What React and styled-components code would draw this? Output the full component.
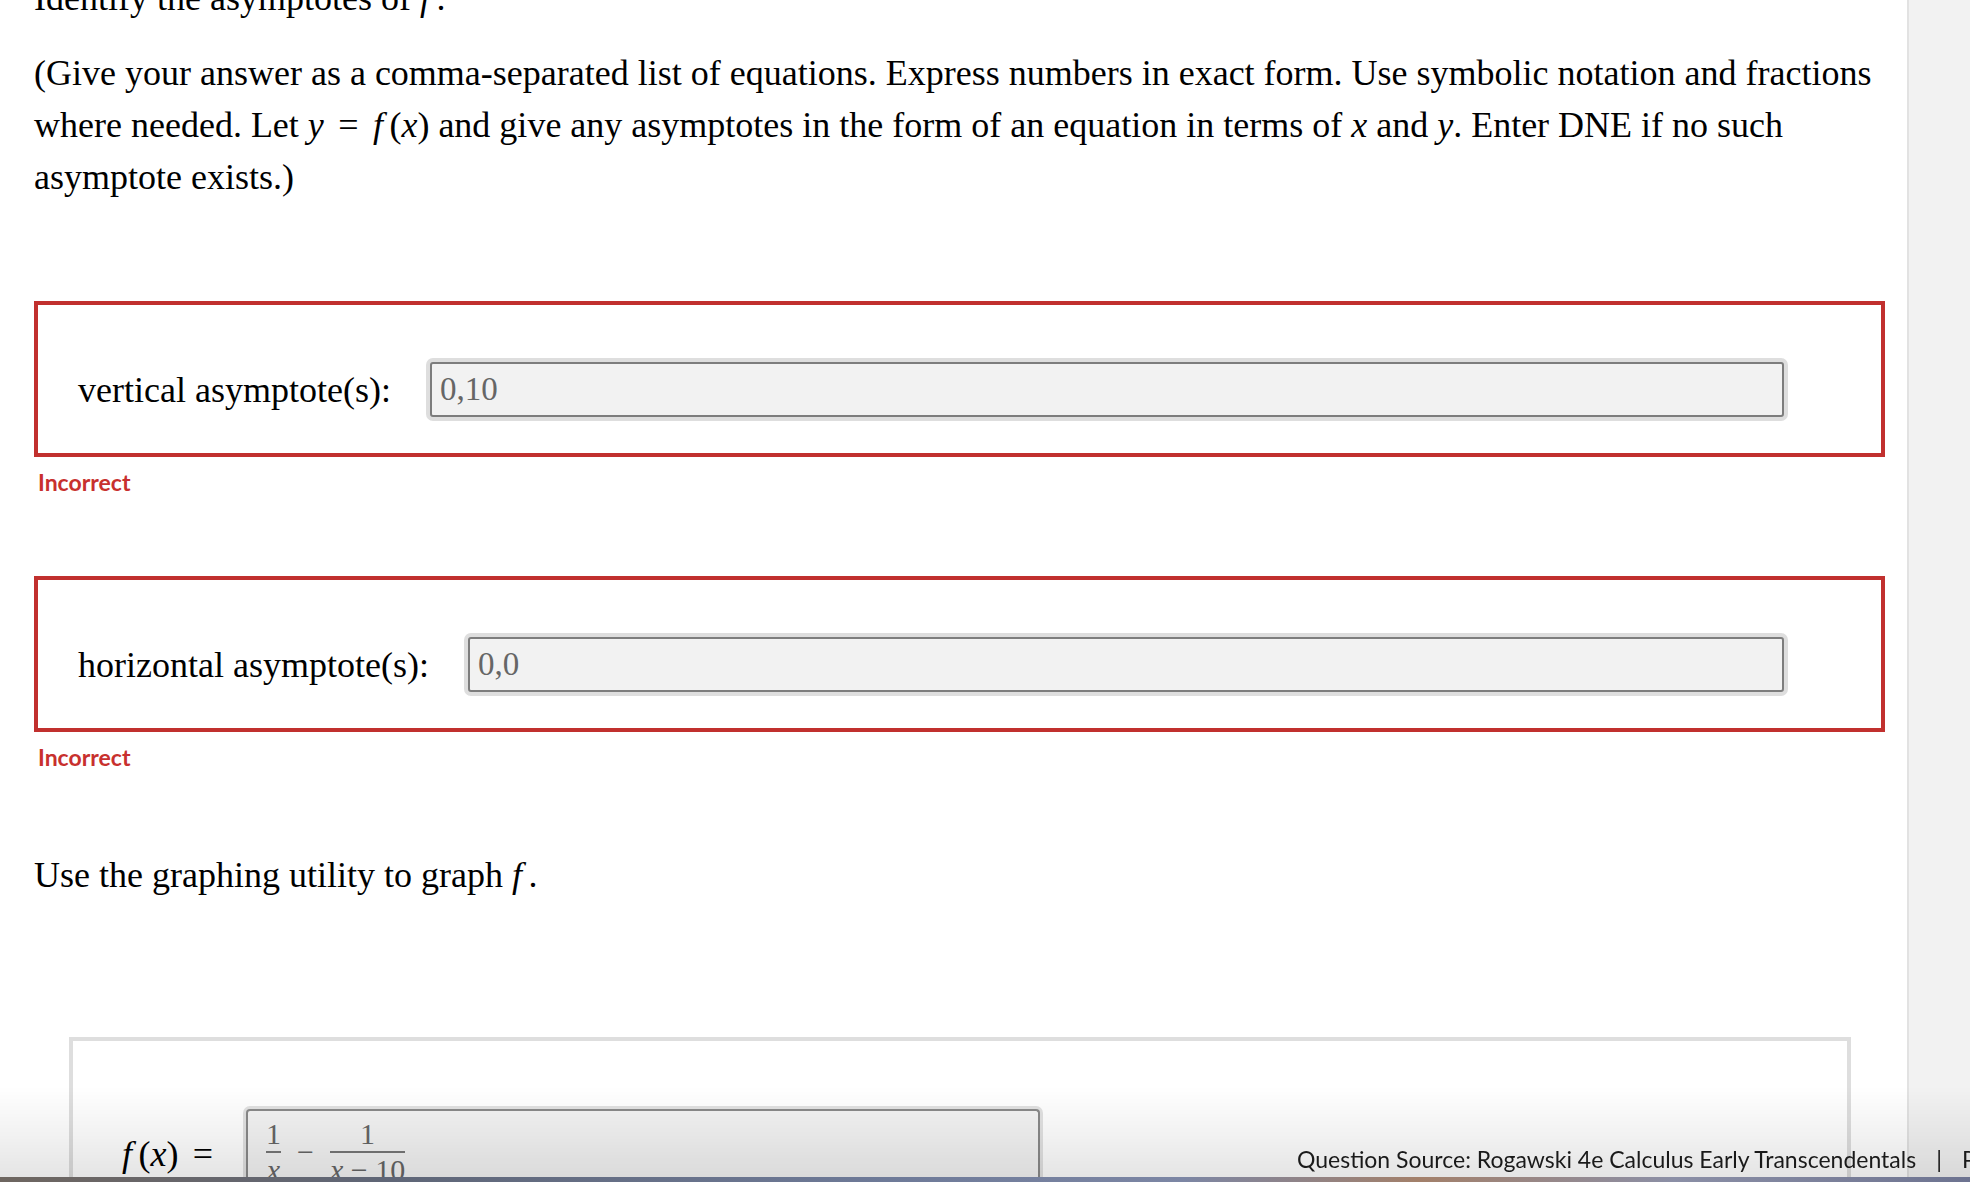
import React from 'react';
import styled, { createGlobalStyle } from 'styled-components';

const GlobalStyle = createGlobalStyle`
    html, body {
        margin: 0;
        padding: 0;
        background: #ffffff;
        overflow: hidden;
    }
    body {
        font-family: "Liberation Serif", "Times New Roman", serif;
        color: #000;
    }
`;

const Screen = styled.div`
    display: flex;
    width: 1970px;
    height: 1182px;
    overflow: hidden;
`;

const Main = styled.div`
    width: 1907px;
    padding: 0 22px 0 34px;
    box-sizing: border-box;
`;

const Sidebar = styled.div`
    flex: 1;
    background: #f2f2f2;
    border-left: 2px solid #e2e2e2;
`;

const Content = styled.div`
    margin-top: -28px;
`;

const Para = styled.p`
    font-size: 36px;
    line-height: 52px;
    margin: ${p => p.$top || 0}px 0 ${p => p.$gap || 0}px;
`;

const Var = styled.i`
    font-style: italic;
    padding-right: ${p => (p.$f ? '0.18em' : '0')};
`;

const Eq = styled.span`
    margin: 0 0.4em;
`;

const AnswerBox = styled.div`
    display: flex;
    align-items: center;
    border: 4px solid #c1302e;
    padding: 57px 97px 36px 40px;
    margin-top: ${p => p.$top}px;
`;

const Label = styled.span`
    font-size: 36px;
    white-space: nowrap;
    margin-right: 39px;
`;

const Field = styled.div`
    flex: 1;
    height: 51px;
    display: flex;
    align-items: center;
    padding-left: 8px;
    background: #f2f2f2;
    border: 2px solid #7d7d7d;
    border-radius: 3px;
    box-shadow: 0 0 0 4px #dedede;
    font-size: 33px;
    color: #666;
`;

const Feedback = styled.div`
    font-family: Lato, "Open Sans", sans-serif;
    font-weight: 700;
    font-size: 23px;
    color: #c8302e;
    margin: 11px 0 0 4px;
    line-height: 28px;
`;

const GraphPanel = styled.div`
    margin: 136px 34px 0 35px;
    border: 4px solid #dedede;
    height: 260px;
    padding: 68px 0 0 49px;
    box-sizing: border-box;
`;

const FormulaRow = styled.div`
    display: flex;
    align-items: flex-start;
`;

const FormulaLabel = styled.span`
    width: 102px;
    font-size: 36px;
    margin-top: 24px;
    margin-right: 22px;
    white-space: nowrap;
`;

const FormulaField = styled.div`
    width: 794px;
    height: 140px;
    background: #f4f4f4;
    border: 2px solid #8a8a8a;
    border-bottom: none;
    border-radius: 4px 4px 0 0;
    box-shadow: 0 0 0 3px #e2e2e2;
    display: flex;
    align-items: flex-start;
    padding: 8px 0 0 18px;
    box-sizing: border-box;
    color: #666;
    font-size: 30px;
`;

const Frac = styled.span`
    display: inline-flex;
    flex-direction: column;
    align-items: center;
    line-height: 30px;
`;

const Bar = styled.span`
    align-self: stretch;
    height: 2px;
    background: #777;
    margin: 2px 0;
`;

const Minus = styled.span`
    margin: 16px 16px 0;
`;

const Footer = styled.div`
    position: fixed;
    left: 0;
    right: 0;
    bottom: 0;
    height: 96px;
    display: flex;
    flex-direction: column;
    justify-content: flex-end;
    background: linear-gradient(to bottom, rgba(0,0,0,0) 0%, rgba(0,0,0,0.05) 50%, rgba(0,0,0,0.11) 100%);
    pointer-events: none;
`;

const SourceLine = styled.div`
    padding-left: 1297px;
    white-space: nowrap;
    overflow: hidden;
    font-family: Lato, "Open Sans", sans-serif;
    font-size: 23px;
    color: #1a1a1a;
    line-height: 28px;
    margin-bottom: 4px;
`;

const Sep = styled.span`
    margin: 0 20px;
`;

const Strip = styled.div`
    height: 5px;
    background: linear-gradient(to right, #6e6660 0%, #5f6677 20%, #6e7a98 45%, #7c86a4 60%, #a3806a 72%, #8b8fa6 85%, #6d7390 100%);
`;

const Fraction = ({ top, bottom }) => (
    <Frac>
        <span>{top}</span>
        <Bar />
        <span>{bottom}</span>
    </Frac>
);

const App = () => {
    return (
        <>
            <GlobalStyle />
            <Screen>
                <Main>
                    <Content>
                        <Para $gap={23}>Identify the asymptotes of <Var $f>f</Var>.</Para>
                        <Para>
                            (Give your answer as a comma-separated list of equations. Express numbers in exact form. Use symbolic notation and fractions
                            where needed. Let <Var>y</Var><Eq>=</Eq><Var $f>f</Var>(<Var>x</Var>) and give any asymptotes in the form of an equation in terms of <Var>x</Var> and <Var>y</Var>. Enter DNE if no such
                            asymptote exists.)
                        </Para>

                        <AnswerBox $top={98}>
                            <Label>vertical asymptote(s):</Label>
                            <Field>0,10</Field>
                        </AnswerBox>
                        <Feedback>Incorrect</Feedback>

                        <AnswerBox $top={80}>
                            <Label>horizontal asymptote(s):</Label>
                            <Field>0,0</Field>
                        </AnswerBox>
                        <Feedback>Incorrect</Feedback>

                        <Para $top={78}>Use the graphing utility to graph <Var $f>f</Var>.</Para>

                        <GraphPanel>
                            <FormulaRow>
                                <FormulaLabel><Var $f>f</Var>(<Var>x</Var>)<Eq>=</Eq></FormulaLabel>
                                <FormulaField>
                                    <Fraction top="1" bottom={<Var>x</Var>} />
                                    <Minus>−</Minus>
                                    <Fraction top="1" bottom={<><Var>x</Var> − 10</>} />
                                </FormulaField>
                            </FormulaRow>
                        </GraphPanel>
                    </Content>
                </Main>
                <Sidebar />
            </Screen>
            <Footer>
                <SourceLine>
                    Question Source: Rogawski 4e Calculus Early Transcendentals<Sep>|</Sep>Publisher: W.H. Freeman
                </SourceLine>
                <Strip />
            </Footer>
        </>
    );
};

export default App;
